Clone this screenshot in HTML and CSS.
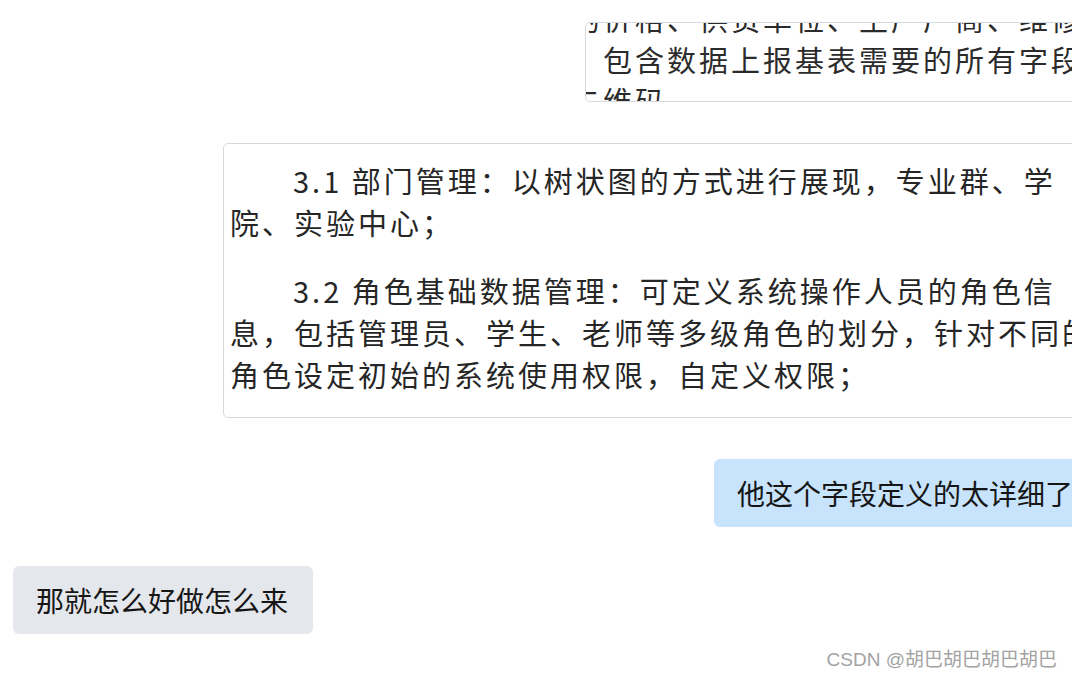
FILE: index.html
```html
<!DOCTYPE html>
<html lang="zh-CN">
<head>
  <meta charset="UTF-8">
  <meta name="viewport" content="width=device-width, initial-scale=1.0">
  <title>聊天记录</title>
  <link rel="stylesheet" href="styles.css">
</head>
<body>
  <div class="chat">
    <!-- 截图消息（上方被裁切） -->
    <div class="row right">
      <div class="card card-top">
        <div class="doc doc-crop">
          <div class="line">的价格、供货单位、生产厂商、维修人员</div>
          <div class="line">　包含数据上报基表需要的所有字段</div>
          <div class="line">二维码</div>
        </div>
      </div>
    </div>

    <div class="row right">
      <div class="card card-main">
        <div class="doc">
          <div class="para">
            <div class="line indent">3.1 部门管理：以树状图的方式进行展现，专业群、学</div>
            <div class="line">院、实验中心；</div>
          </div>
          <div class="para">
            <div class="line indent">3.2 角色基础数据管理：可定义系统操作人员的角色信</div>
            <div class="line">息，包括管理员、学生、老师等多级角色的划分，针对不同的</div>
            <div class="line">角色设定初始的系统使用权限，自定义权限；</div>
          </div>
        </div>
      </div>
    </div>

    <div class="row right">
      <div class="bubble bubble-me">他这个字段定义的太详细了</div>
    </div>

    <div class="row left">
      <div class="bubble bubble-other">那就怎么好做怎么来</div>
    </div>
  </div>

  <div class="watermark">CSDN @胡巴胡巴胡巴胡巴</div>
</body>
</html>
```

FILE: styles.css
```css
html, body {
  margin: 0;
  padding: 0;
  background: #fff;
  overflow: hidden;
}

body {
  width: 1072px;
  height: 680px;
  position: relative;
  font-family: "Noto Sans CJK SC", "Noto Sans", sans-serif;
}

.chat {
  width: 1096px;
  padding: 22px 0 0 13px;
  box-sizing: border-box;
  display: flex;
  flex-direction: column;
  gap: 41px;
}

.row {
  display: flex;
}

.row.right {
  justify-content: flex-end;
}

.row.left {
  justify-content: flex-start;
}

.card {
  background: #fff;
  border: 1px solid #d6dadf;
  border-radius: 5px;
  overflow: hidden;
}

.card-top {
  width: 509px;
  height: 78px;
}

.card-main {
  width: 865px;
  padding: 15px 0 22px 6px;
}

.doc {
  font-size: 29px;
  letter-spacing: 3px;
  color: #262626;
  white-space: nowrap;
}

.doc .line {
  line-height: 42px;
}

.doc-crop {
  margin: -25px 0 0 -15px;
  color: #2b2b2b;
}

.doc-crop .line {
  line-height: 41px;
}

.para + .para {
  margin-top: 26px;
}

.indent {
  text-indent: 63px;
}

.bubble {
  font-size: 28px;
  line-height: 36px;
  padding: 16px 23px;
  border-radius: 6px;
  color: #161616;
  white-space: nowrap;
}

.bubble-me {
  background: #c7e4fc;
}

.bubble-other {
  background: #e4e7eb;
  padding-right: 25px;
  margin-top: -2px;
}

.watermark {
  position: absolute;
  right: 15px;
  bottom: 7px;
  font-family: "Liberation Sans", "Noto Sans CJK SC", sans-serif;
  font-size: 19px;
  line-height: 26px;
  color: #a3a3a3;
  text-shadow: 0 0 1px rgba(255, 255, 255, 0.8);
}
```
